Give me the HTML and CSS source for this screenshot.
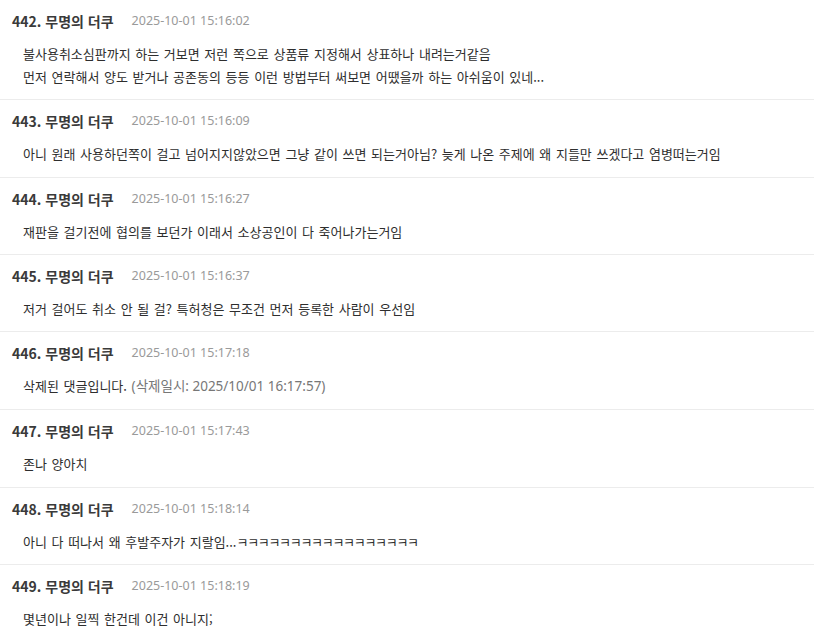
FILE: index.html
```html
<!DOCTYPE html>
<html lang="ko">
  <head>
    <meta charset="UTF-8" />
    <meta name="viewport" content="width=device-width, initial-scale=1.0" />
    <title>댓글</title>
    <link rel="stylesheet" href="styles.css">
  </head>

  <body>
    <ul class="comments">
      <li class="comment">
        <div class="comment-head">
          <span class="comment-author">442. 무명의 더쿠</span>
          <span class="comment-date">2025-10-01 15:16:02</span>
        </div>
        <div class="comment-body">
          불사용취소심판까지 하는 거보면 저런 쪽으로 상품류 지정해서 상표하나 내려는거같음<br />
          먼저 연락해서 양도 받거나 공존동의 등등 이런 방법부터 써보면 어땠을까 하는 아쉬움이 있네...
        </div>
      </li>
      <li class="comment">
        <div class="comment-head">
          <span class="comment-author">443. 무명의 더쿠</span>
          <span class="comment-date">2025-10-01 15:16:09</span>
        </div>
        <div class="comment-body">아니 원래 사용하던쪽이 걸고 넘어지지않았으면 그냥 같이 쓰면 되는거아님? 늦게 나온 주제에 왜 지들만 쓰겠다고 염병떠는거임</div>
      </li>
      <li class="comment">
        <div class="comment-head">
          <span class="comment-author">444. 무명의 더쿠</span>
          <span class="comment-date">2025-10-01 15:16:27</span>
        </div>
        <div class="comment-body">재판을 걸기전에 협의를 보던가 이래서 소상공인이 다 죽어나가는거임</div>
      </li>
      <li class="comment">
        <div class="comment-head">
          <span class="comment-author">445. 무명의 더쿠</span>
          <span class="comment-date">2025-10-01 15:16:37</span>
        </div>
        <div class="comment-body">저거 걸어도 취소 안 될 걸? 특허청은 무조건 먼저 등록한 사람이 우선임</div>
      </li>
      <li class="comment">
        <div class="comment-head">
          <span class="comment-author">446. 무명의 더쿠</span>
          <span class="comment-date">2025-10-01 15:17:18</span>
        </div>
        <div class="comment-body">삭제된 댓글입니다. <span class="deleted-at">(삭제일시: 2025/10/01 16:17:57)</span></div>
      </li>
      <li class="comment">
        <div class="comment-head">
          <span class="comment-author">447. 무명의 더쿠</span>
          <span class="comment-date">2025-10-01 15:17:43</span>
        </div>
        <div class="comment-body">존나 양아치</div>
      </li>
      <li class="comment">
        <div class="comment-head">
          <span class="comment-author">448. 무명의 더쿠</span>
          <span class="comment-date">2025-10-01 15:18:14</span>
        </div>
        <div class="comment-body">아니 다 떠나서 왜 후발주자가 지랄임...<span class="laugh">ㅋㅋㅋㅋㅋㅋㅋㅋㅋㅋㅋㅋㅋㅋㅋㅋㅋ</span></div>
      </li>
      <li class="comment">
        <div class="comment-head">
          <span class="comment-author">449. 무명의 더쿠</span>
          <span class="comment-date">2025-10-01 15:18:19</span>
        </div>
        <div class="comment-body">몇년이나 일찍 한건데 이건 아니지;</div>
      </li>
    </ul>
  </body>
</html>
```

FILE: styles.css
```css
body {
  margin: 0;
  font-family: "Noto Sans CJK KR", "Noto Sans", sans-serif;
  background: #ffffff;
  color: #333;
}

.comments {
  list-style: none;
  margin: 0;
  padding: 0;
}

.comment {
  padding: 10px 12px 11.3px;
  border-bottom: 1px solid #ececec;
}

.comment-head {
  display: flex;
  align-items: center;
  gap: 18px;
  height: 22px;
  line-height: 22px;
}

.comment-author {
  font-size: 14px;
  font-weight: bold;
  color: #3a3a3a;
}

.comment-date {
  font-family: "Noto Sans", "Noto Sans CJK KR", sans-serif;
  font-size: 12.5px;
  color: #9a9a9a;
}

.comment-body {
  margin-top: 10px;
  padding-left: 11px;
  font-size: 13px;
  line-height: 23px;
  word-spacing: 1px;
  color: #2e2e2e;
}

.deleted-at {
  font-family: "Noto Sans", "Noto Sans CJK KR", sans-serif;
  font-size: 13.5px;
  word-spacing: 0;
  color: #777;
}

.laugh {
  letter-spacing: -1.3px;
}
```
